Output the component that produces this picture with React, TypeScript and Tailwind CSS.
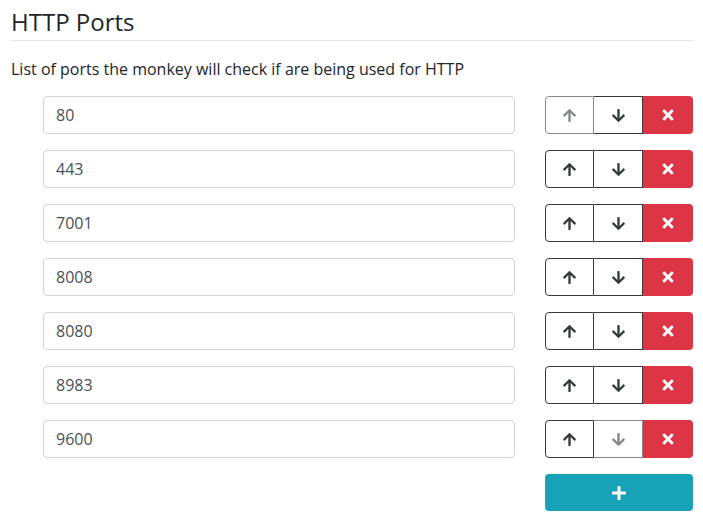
import React from "react";
import { FaArrowUp, FaArrowDown, FaTimes, FaPlus } from "react-icons/fa";

const ports = ["80", "443", "7001", "8008", "8080", "8983", "9600"];

export default function App() {
  return (
    <div className="w-[703px] h-[523px] bg-white overflow-hidden" style={{ fontFamily: '"Open Sans", sans-serif' }}>
      <div className="pl-[11px] pr-[10px] pt-[4px]">
        <div className="text-[24px] leading-[36px] text-[#212529] border-b border-[#e5e5e5]">HTTP Ports</div>
        <div className="text-[16px] leading-[24px] text-[#212529] mt-[16px]">
          List of ports the monkey will check if are being used for HTTP
        </div>
      </div>
      <div className="flex flex-col gap-[16px] pl-[43px] mt-[15px]">
        {ports.map((p, i) => (
          <div key={p} className="flex items-center">
            <div className="w-[472px] h-[38px] border border-[#ced4da] rounded-[4px] px-[12px] flex items-center text-[16px] text-[#495057]">
              {p}
            </div>
            <div className="ml-[30px] flex h-[38px]">
              <button
                className={`w-[49px] h-[38px] flex items-center justify-center border border-[#343a40] rounded-l-[4px] bg-white text-[#343a40] ${i === 0 ? "opacity-60" : ""}`}
              >
                <FaArrowUp size={15} />
              </button>
              <button
                className={`w-[49px] h-[38px] flex items-center justify-center border border-l-0 border-[#343a40] bg-white text-[#343a40] ${i === ports.length - 1 ? "opacity-60" : ""}`}
              >
                <FaArrowDown size={15} />
              </button>
              <button className="w-[50px] h-[38px] flex items-center justify-center bg-[#dc3545] rounded-r-[4px] text-white">
                <FaTimes size={16} />
              </button>
            </div>
          </div>
        ))}
        <div className="flex">
          <div className="w-[472px]" />
          <button className="ml-[30px] w-[148px] h-[37px] flex items-center justify-center bg-[#17a2b8] rounded-[4px] text-white">
            <FaPlus size={16} />
          </button>
        </div>
      </div>
    </div>
  );
}
